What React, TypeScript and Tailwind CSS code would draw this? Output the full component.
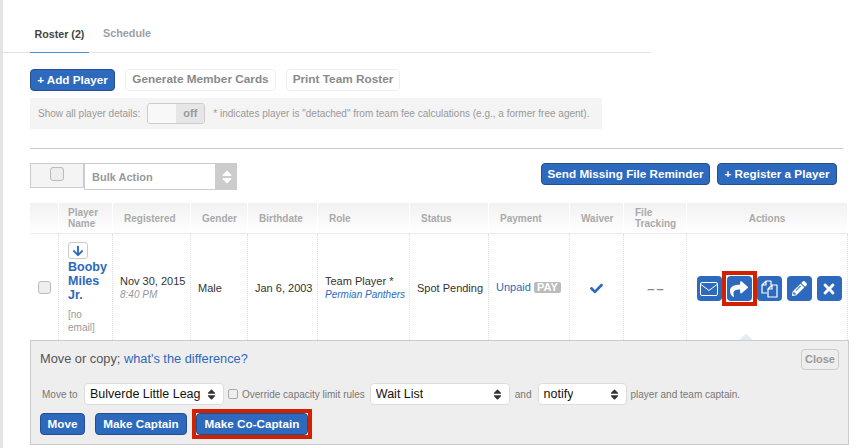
import React from "react";
import { FaArrowDown, FaCheck, FaPencilAlt, FaShare, FaSort, FaTimes } from "react-icons/fa";

const blueBtn =
  "flex items-center justify-center h-[22px] rounded-[4px] bg-[#2d69bd] border border-[#22508f] text-white font-bold text-[11.7px]";
const grayBtn =
  "flex items-center justify-center h-[22px] rounded-[4px] bg-white border border-[#eeeeee] text-[#8a8a8a] font-bold text-[11.8px]";
const headCell =
  "flex items-center border-r border-white text-[10px] font-bold leading-[11px] text-[#aaaaaa]";
const bodyCell = "flex items-center border-r border-dotted border-[#dddddd] text-[11px] text-[#333333]";
const actionBtn = "flex items-center justify-center w-[25px] h-[25px] rounded-[4px] bg-[#2d69bd] text-white";

function FakeSelect({ label, width }: { label: string; width: string }) {
  return (
    <div className={`flex items-center justify-between h-[22px] ${width} rounded-[4px] bg-white border border-[#dddddd] pl-[5px] pr-[5px]`}>
      <span className="overflow-hidden whitespace-nowrap text-[12.5px] text-[#111111]">{label}</span>
      <FaSort className="shrink-0 ml-[5px] text-[13px] text-[#333333]" />
    </div>
  );
}

function EnvelopeIcon() {
  return (
    <svg width="18" height="14" viewBox="0 0 18 14" fill="none" stroke="white" strokeWidth="1">
      <rect x="0.5" y="0.5" width="17" height="13" rx="1.5" />
      <path d="M1 2.5 L9 8.5 L17 2.5" />
    </svg>
  );
}

function CopyIcon() {
  return (
    <svg width="18" height="18" viewBox="0 0 18 18" fill="none" stroke="white" strokeWidth="1.2" strokeLinejoin="round">
      <path d="M6 1 H11 V5 M6 1 L2 5 V13 H7 M6 1 V5 H2" />
      <path d="M12 5 H17 V17 H8 V9 Z M12 5 V9 H8" />
    </svg>
  );
}

export default function App() {
  return (
    <div className="h-[448px] w-[868px] overflow-hidden bg-white border-l-[3px] border-[#e4e4e4] font-['Liberation_Sans',Arial,sans-serif]">
      <div className="w-[648px] h-[53px] pt-[21px] border-b border-[#e3e3e3] pl-[27px] flex items-end">
        <div className="w-[59px] h-[32px] flex items-start pt-[5px] justify-center border-b border-[#4a90d9] -mb-px text-[10.7px] font-bold text-[#444444]">
          Roster (2)
        </div>
        <div className="ml-[14px] h-[32px] pt-[5px] text-[10.8px] font-bold text-[#9aa0a8]">Schedule</div>
      </div>

      <div className="pl-[27px] pt-[16px]">
        <div className="flex gap-[10px]">
          <div className={`${blueBtn} w-[85px]`}>+ Add Player</div>
          <div className={`${grayBtn} w-[151px]`}>Generate Member Cards</div>
          <div className={`${grayBtn} w-[114px]`}>Print Team Roster</div>
        </div>

        <div className="mt-[7px] w-[572px] h-[31px] flex items-center pl-[8px] bg-[#f4f4f4] text-[10px] text-[#999999] whitespace-nowrap">
          <span>Show all player details:</span>
          <div className="ml-[7px] flex shrink-0 w-[58px] h-[21px] rounded-[3px] border border-[#cccccc] overflow-hidden">
            <div className="w-[28px] bg-[#f8f8f8]" />
            <div className="flex-1 flex items-center justify-center bg-[#e6e6e6] text-[11px] font-bold text-[#999999]">off</div>
          </div>
          <span className="ml-[8px]">* indicates player is "detached" from team fee calculations (e.g., a former free agent).</span>
        </div>

        <div className="mt-[19px] w-[813px] border-t border-[#cccccc]" />

        <div className="mt-[14px] flex items-start justify-between w-[807px]">
          <div className="flex items-start">
            <div className="w-[54px] h-[25px] flex items-center justify-center pb-[3px] bg-[#f4f4f4] border border-[#cccccc]">
              <div className="w-[14px] h-[14px] rounded-[3px] bg-[#eeeeee] border border-[#bbbbbb]" />
            </div>
            <div className="w-[132px] h-[27px] flex items-center pl-[7px] pt-[1px] bg-white border border-[#cccccc] text-[11px] font-bold text-[#999999]">
              Bulk Action
            </div>
            <div className="w-[21px] h-[27px] flex items-center justify-center bg-[#cccccc]">
              <FaSort className="text-[16px] text-white" />
            </div>
          </div>
          <div className="flex gap-[7px]">
            <div className={`${blueBtn} w-[169px]`}>Send Missing File Reminder</div>
            <div className={`${blueBtn} w-[120px]`}>+ Register a Player</div>
          </div>
        </div>

        <div className="mt-[13px] w-[819px] grid grid-cols-[29px_54px_78px_57px_70px_92px_79px_81px_54px_63px_161px]">
          <div className="col-span-11 grid grid-cols-subgrid h-[31px] border-b border-[#eeeeee] bg-gradient-to-b from-[#f1f1f1] to-white">
            <div className={headCell} />
            <div className={`${headCell} pl-[9px]`}>Player<br />Name</div>
            <div className={`${headCell} pl-[11px]`}>Registered</div>
            <div className={`${headCell} pl-[11px]`}>Gender</div>
            <div className={`${headCell} pl-[11px]`}>Birthdate</div>
            <div className={`${headCell} pl-[11px]`}>Role</div>
            <div className={`${headCell} pl-[11px]`}>Status</div>
            <div className={`${headCell} pl-[11px]`}>Payment</div>
            <div className={`${headCell} pl-[11px]`}>Waiver</div>
            <div className={`${headCell} pl-[11px]`}>File<br />Tracking</div>
            <div className={`${headCell} justify-center`}>Actions</div>
          </div>

          <div className="col-span-11 grid grid-cols-subgrid h-[106px]">
            <div className={`${bodyCell} justify-center`}>
              <div className="w-[13px] h-[13px] rounded-[3px] bg-[#eeeeee] border border-[#bbbbbb]" />
            </div>
            <div className={`${bodyCell} flex-col items-start pl-[9px] pt-[8px]`}>
              <div className="w-[20px] h-[17px] flex items-center justify-center rounded-[3px] border border-[#cccccc]">
                <FaArrowDown className="text-[12px] text-[#2d69bd]" />
              </div>
              <div className="mt-[1px] text-[12.5px] leading-[14px] font-bold text-[#2d69bd]">Booby<br />Miles<br />Jr.</div>
              <div className="mt-[6px] text-[10px] leading-[13px] text-[#999999]">[no<br />email]</div>
            </div>
            <div className={`${bodyCell} flex-col items-start justify-center pl-[7px]`}>
              <div className="leading-[14px]">Nov 30, 2015</div>
              <div className="text-[10px] leading-[13px] italic text-[#999999]">8:40 PM</div>
            </div>
            <div className={`${bodyCell} pl-[7px] pt-[2px]`}>Male</div>
            <div className={`${bodyCell} pl-[7px] pt-[2px]`}>Jan 6, 2003</div>
            <div className={`${bodyCell} flex-col items-start justify-center pl-[7px]`}>
              <div className="leading-[14px]">Team Player *</div>
              <div className="text-[10px] leading-[13px] italic text-[#2d69bd] whitespace-nowrap">Permian Panthers</div>
            </div>
            <div className={`${bodyCell} pl-[7px] pt-[2px]`}>Spot Pending</div>
            <div className={`${bodyCell} pl-[7px] pt-[1px]`}>
              <span className="text-[#2d69bd]">Unpaid</span>
              <span className="ml-[3px] w-[27px] h-[11px] flex items-center justify-center rounded-[2px] bg-[#bbbbbb] text-[11px] font-bold text-white">PAY</span>
            </div>
            <div className={`${bodyCell} justify-center pt-[2px]`}>
              <FaCheck className="text-[13px] text-[#2d69bd]" />
            </div>
            <div className={`${bodyCell} justify-center pt-[4px] pl-[3px] text-[#888888] font-bold`}>
              <span className="text-[13px] tracking-[2px]">––</span>
            </div>
            <div className={`${bodyCell} justify-center pt-[3px] pl-[4px]`}>
              <div className="flex gap-[5px]">
                <div className={actionBtn}><EnvelopeIcon /></div>
                <div className="outline-[4px] outline-offset-1 outline-[#d02200]">
                  <div className={actionBtn}><FaShare className="text-[18px]" /></div>
                </div>
                <div className={actionBtn}><CopyIcon /></div>
                <div className={actionBtn}><FaPencilAlt className="text-[15px]" /></div>
                <div className={actionBtn}><FaTimes className="text-[16px]" /></div>
              </div>
            </div>
          </div>
        </div>

        <div className="relative w-[819px] h-[105px] bg-[#eeeeee] border border-[#cccccc] pl-[9px] pt-[10px]">
          <div className="absolute -top-[7px] left-[708px] w-0 h-0 border-x-[7px] border-x-transparent border-b-[6px] border-b-[#e3ebf3]" />
          <div className="flex justify-between items-start pr-[9px]">
            <div className="text-[12.8px] leading-[16px] text-[#555555]">
              Move or copy; <span className="text-[#2d69bd]">what's the difference?</span>
            </div>
            <div className="flex items-center justify-center w-[38px] h-[21px] -mt-[2px] rounded-[4px] border border-[#cccccc] text-[11px] font-bold text-[#999999]">Close</div>
          </div>
          <div className="mt-[13px] flex items-center text-[10px] text-[#777777]">
            <span className="ml-[2px] w-[42px]">Move to</span>
            <FakeSelect label="Bulverde Little League" width="w-[140px]" />
            <div className="ml-[4px] w-[10px] h-[10px] rounded-[2px] bg-[#eeeeee] border border-[#aaaaaa]" />
            <span className="ml-[4px]">Override capacity limit rules</span>
            <div className="ml-[5px]"><FakeSelect label="Wait List" width="w-[140px]" /></div>
            <span className="ml-[5px]">and</span>
            <div className="ml-[6px]"><FakeSelect label="notify" width="w-[89px]" /></div>
            <span className="ml-[4px]">player and team captain.</span>
          </div>
          <div className="mt-[8px] flex">
            <div className={`${blueBtn} w-[45px]`}>Move</div>
            <div className={`${blueBtn} w-[92px] ml-[10px]`}>Make Captain</div>
            <div className="ml-[9px] outline-[4px] outline-[#d02200]">
              <div className={`${blueBtn} w-[112px]`}>Make Co-Captain</div>
            </div>
          </div>
        </div>
      </div>
    </div>
  );
}
